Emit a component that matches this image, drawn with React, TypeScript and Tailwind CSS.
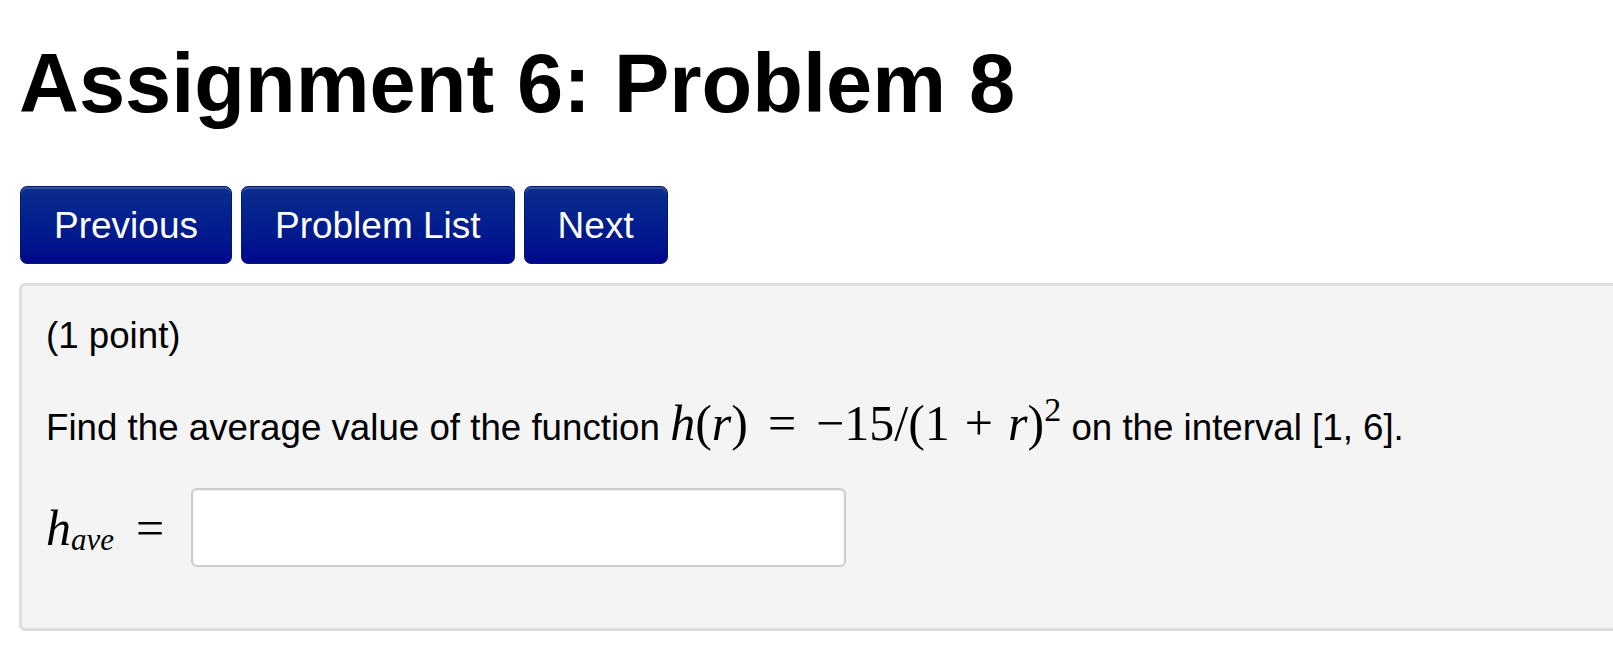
import React from 'react';

const NavButton: React.FC<{ label: string }> = ({ label }) => (
  <button className="h-[78px] px-[33px] rounded-[7px] border border-[#001a6e] bg-gradient-to-b from-[#0c2c8f] to-[#00068c] text-white text-[37px] leading-none shadow-[inset_0_2px_0_rgba(255,255,255,0.18)]">
    {label}
  </button>
);

export default function App() {
  return (
    <div className="min-h-screen bg-white overflow-hidden text-black font-['Liberation_Sans',Arial,sans-serif]">
      {/* Header */}
      <h1 className="pl-[19px] mt-[42px] text-[83px] font-bold leading-none tracking-normal">
        Assignment 6: Problem 8
      </h1>

      {/* Navigation */}
      <div className="flex gap-[9px] pl-[20px] mt-[61px]">
        <NavButton label="Previous" />
        <NavButton label="Problem List" />
        <NavButton label="Next" />
      </div>

      {/* Problem body */}
      <div className="ml-[19px] -mr-[40px] mt-[19px] bg-[#f4f4f4] border-[3px] border-[#dedede] rounded-l-[6px] pl-[24px] pt-[25px] pb-[61px]">
        <p className="text-[36.7px] leading-[50px]">(1 point)</p>

        <p className="mt-[37px] text-[36.7px] leading-[50px] whitespace-nowrap">
          Find the average value of the function{' '}
          <span className="font-['Liberation_Serif',serif] text-[50px] leading-none">
            <i>h</i>(<i>r</i>)<span className="mx-[20px]">=</span>−15/(1<span className="mx-[15px]">+</span><i>r</i>)
            <sup className="text-[34px] relative -top-[19px]">2</sup>
          </span>{' '}
          on the interval [1, 6].
        </p>

        <div className="mt-[35px] flex items-center">
          <span className="font-['Liberation_Serif',serif] text-[50px] leading-none whitespace-nowrap">
            <i>h</i>
            <sub className="text-[31px] italic relative top-[5px]">ave</sub>
            <span className="ml-[22px]">=</span>
          </span>
          <input
            type="text"
            className="ml-[27px] w-[655px] h-[79px] bg-white border-2 border-[#cccccc] rounded-[6px] shadow-[inset_0_1px_2px_rgba(0,0,0,0.08)] outline-none"
          />
        </div>
      </div>
    </div>
  );
}
